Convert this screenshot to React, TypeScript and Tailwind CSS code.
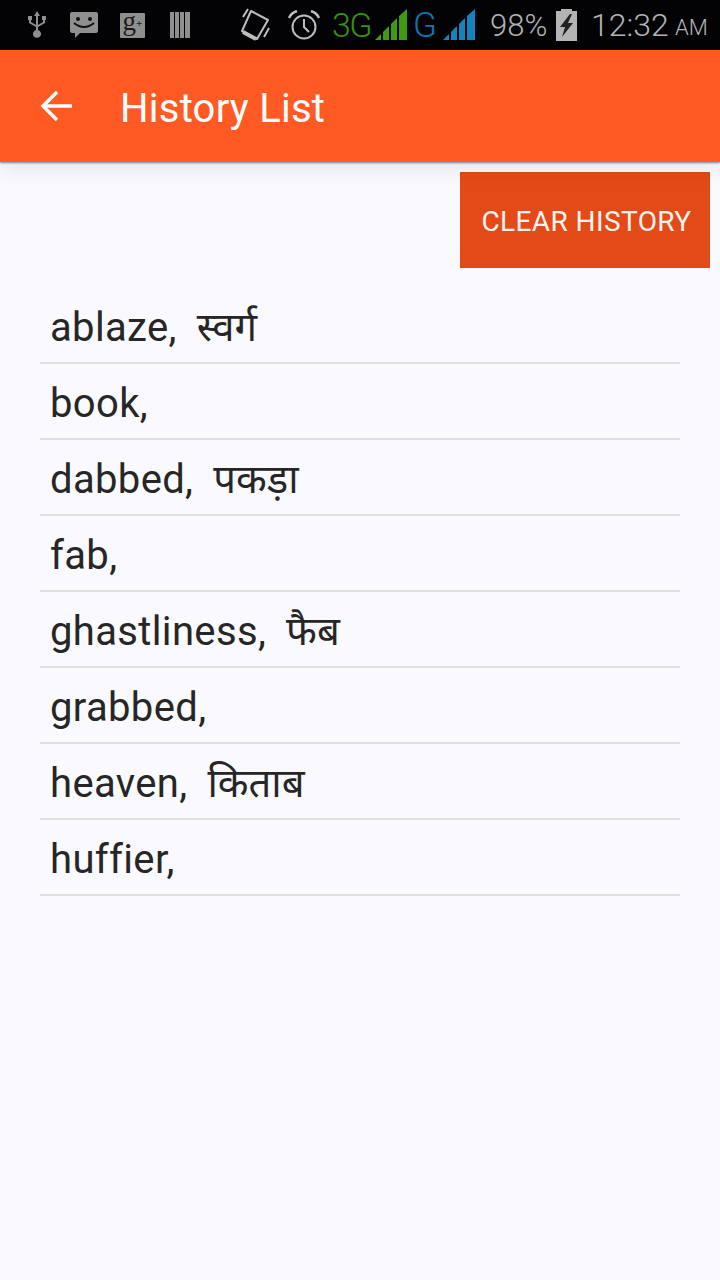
import React from 'react';

const words = [
  { en: 'ablaze', hi: 'स्वर्ग' },
  { en: 'book', hi: '' },
  { en: 'dabbed', hi: 'पकड़ा' },
  { en: 'fab', hi: '' },
  { en: 'ghastliness', hi: 'फैब' },
  { en: 'grabbed', hi: '' },
  { en: 'heaven', hi: 'किताब' },
  { en: 'huffier', hi: '' },
];

const Signal: React.FC<{ color: string; className?: string }> = ({ color, className }) => (
  <svg className={className} width="32" height="32" viewBox="0 0 32 32" fill={color}>
    <path d="M0 31 L6 25 V31 Z" />
    <path d="M8 31 V23 L14 17 V31 Z" />
    <path d="M16 31 V15 L22 9 V31 Z" />
    <path d="M24 31 V7 L32 0 V31 Z" />
  </svg>
);

const StatusBar = () => (
  <div className="h-[50px] bg-[#030305] flex items-center text-[#b4b4b4] shrink-0 font-['Roboto',sans-serif] font-light">
    {/* usb */}
    <svg className="ml-[27px]" width="20" height="28" viewBox="0 0 20 28" fill="#8f8f8f">
      <path d="M10 0 L13 5 H11 V19 A4 4 0 1 1 9 19 V16 L2 12 V9 H1 V5 H5 V9 H4 V11 L9 14 V5 H7 Z" />
      <path d="M11 14 L16 11 V9 H15 V5 H19 V9 H18 V12 L11 16 Z" />
    </svg>
    {/* message */}
    <svg className="ml-[23px]" width="28" height="26" viewBox="0 0 28 26">
      <path d="M2 0 H26 A2 2 0 0 1 28 2 V19 A2 2 0 0 1 26 21 H10 L5 26 V21 H2 A2 2 0 0 1 0 19 V2 A2 2 0 0 1 2 0 Z" fill="#8f8f8f" />
      <circle cx="8" cy="7" r="2" fill="#111" />
      <circle cx="20" cy="7" r="2" fill="#111" />
      <path d="M4 11 Q14 19 24 11" stroke="#111" strokeWidth="2" fill="none" />
    </svg>
    {/* g+ */}
    <div className="ml-[22px] w-[25px] h-[25px] bg-[#8f8f8f] rounded-[1px] flex items-center justify-center text-[#1a1a1a] text-[27px] leading-none font-normal font-['Liberation_Serif',serif] pb-[7px]">
      g<span className="text-[11px] font-bold mt-[4px]">+</span>
    </div>
    {/* barcode */}
    <svg className="ml-[25px]" width="20" height="26" viewBox="0 0 20 26" fill="#8f8f8f">
      <rect x="0" y="0" width="4" height="26" />
      <rect x="5" y="0" width="4" height="26" />
      <rect x="10" y="0" width="4" height="26" />
      <rect x="15" y="0" width="5" height="26" />
    </svg>
    {/* vibrate */}
    <svg className="ml-[50px]" width="30" height="34" viewBox="0 0 30 34" fill="none" stroke="#bdbdbd" strokeWidth="2" strokeLinejoin="round">
      <path d="M11 3 L28 12 L17 31 L2 23 Z" />
      <path d="M3 24 L16 31" strokeWidth="4" />
      <path d="M8 1 L3 9 M29 20 L24 29" />
    </svg>
    {/* alarm */}
    <svg className="ml-[18px]" width="32" height="30" viewBox="0 0 32 30" fill="none" stroke="#bdbdbd" strokeWidth="2">
      <circle cx="16" cy="17" r="11.5" />
      <path d="M16 9 V17 L21 22" />
      <path d="M1 8 Q3 3 9 1 M31 8 Q29 3 23 1" strokeWidth="2.5" />
    </svg>
    <span className="ml-[12px] w-[43px] text-[34px] leading-none text-[#37920f] tracking-[-1.5px] whitespace-nowrap">3G</span>
    <Signal color="#3f9a12" />
    <span className="ml-[6px] w-[24px] text-[35px] leading-none text-[#0f76ad]">G</span>
    <Signal className="ml-[6px]" color="#1584bd" />
    <span className="ml-[15px] w-[57px] text-[31px] leading-none whitespace-nowrap">98%</span>
    {/* battery */}
    <svg className="ml-[9px]" width="21" height="32" viewBox="0 0 21 32">
      <path d="M5 0 H16 V2 H21 V32 H0 V2 H5 Z" fill="#b4b4b4" />
      <path d="M14 5 L4 18 H9 L6 28 L17 14 H12 L16 5 Z" fill="#222" />
    </svg>
    <span className="ml-[14px] w-[77px] text-[32px] leading-none whitespace-nowrap">12:32</span>
    <span className="ml-[7px] mt-[5px] text-[22px] leading-none">AM</span>
  </div>
);

export default function App() {
  return (
    <div className="w-[720px] h-[1280px] flex flex-col bg-[#faf9fd] font-['Roboto','Noto_Sans','Noto_Sans_Devanagari',sans-serif] overflow-hidden">
      <StatusBar />

      {/* Toolbar */}
      <div className="h-[112px] shrink-0 bg-[#ff5a23] flex items-center shadow-[0_1px_2px_rgba(0,0,0,0.45),0_8px_20px_rgba(0,0,0,0.08)] relative">
        <svg className="ml-[40px]" width="33" height="32" viewBox="0 0 33 32" fill="none" stroke="#fff" strokeWidth="3.5">
          <path d="M32 16 H3" />
          <path d="M17 2 L3 16 L17 30" />
        </svg>
        <h1 className="ml-[47px] pt-[6px] text-white text-[40px] leading-none tracking-[0.25px]">History List</h1>
      </div>

      {/* Clear button */}
      <div className="flex justify-end pt-[10px] pr-[10px]">
        <button className="w-[250px] h-[96px] pt-[4px] pl-[3px] bg-[#e34a18] text-[#fdf3ee] text-[28px] tracking-[0.4px] flex items-center justify-center">
          CLEAR HISTORY
        </button>
      </div>

      {/* History rows */}
      <ul className="mx-[40px] mt-[20px]">
        {words.map((w) => (
          <li key={w.en} className="h-[76px] pl-[10px] pt-[6px] border-b-2 border-[#e0e0e2] flex items-center text-[40px] tracking-[0.35px] text-[#262626] whitespace-pre">
            {w.en},
            {w.hi && <span className="ml-[20px] tracking-[0px]">{w.hi}</span>}
          </li>
        ))}
      </ul>
    </div>
  );
}
